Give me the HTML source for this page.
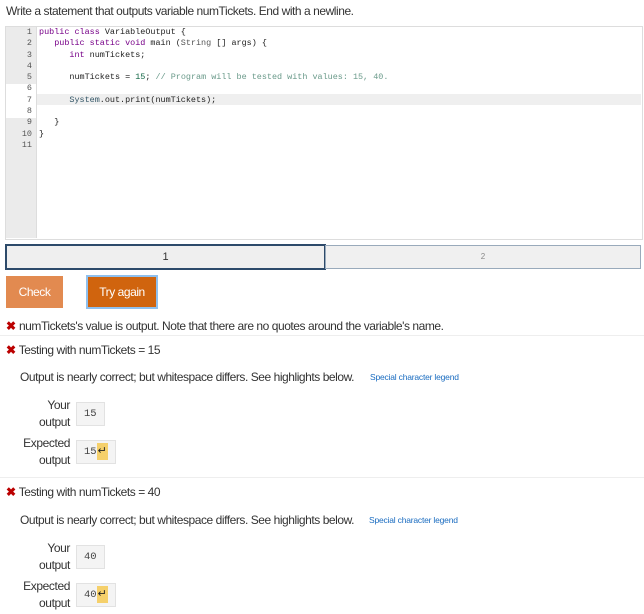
<!DOCTYPE html>
<html><head><style>
body{margin:0;width:644px;height:614px;background:#fff;font-family:"Liberation Sans",sans-serif;color:#333;position:relative;overflow:hidden}
.a{position:absolute;white-space:nowrap}
.t{font-size:12px;letter-spacing:-0.45px}
.code{font-family:"Liberation Mono",monospace;font-size:8.45px;line-height:11.3px}
.x{color:#b00;font-weight:bold;letter-spacing:0}
.box{position:absolute;background:#f4f4f4;border:1px solid #e2e2e2;font-family:"Liberation Mono",monospace;font-size:10.5px;padding:0 7px;line-height:22px;height:22px;color:#444}
.hl{background:#f5d06b;display:inline-block;width:11px;height:17px;line-height:15px;vertical-align:middle;text-align:center;font-family:"DejaVu Sans",sans-serif;font-size:11px;color:#222}
.lbl{position:absolute;text-align:right;width:70px;font-size:12px;line-height:17px;letter-spacing:-0.4px}
</style></head><body>
<div class="a t" style="left:6px;top:4px">Write a statement that outputs variable numTickets. End with a newline.</div>
<div class="a" style="left:5px;top:26px;width:636px;height:212px;border:1px solid #ddd;background:#fff"></div>
<div class="a" style="left:6px;top:27px;width:30px;height:211px;background:#ebebeb;border-right:1px solid #ddd"></div>
<div class="a" style="left:6px;top:84px;width:30px;height:34px;background:#fff"></div>
<div class="a" style="left:37px;top:94px;width:604px;height:11px;background:#efefef"></div>
<div class="a code" style="left:8px;top:27px;width:24px;text-align:right;color:#555">1<br>2<br>3<br>4<br>5<br>6<br>7<br>8<br>9<br>10<br>11</div>
<div class="a code" style="left:39px;top:27px;color:#222">
<span style="color:#708">public class</span> VariableOutput {<br>
&nbsp;&nbsp;&nbsp;<span style="color:#708">public static void</span> main (<span style="color:#555">String</span> [] args) {<br>
&nbsp;&nbsp;&nbsp;&nbsp;&nbsp;&nbsp;<span style="color:#708">int</span> numTickets;<br><br>
&nbsp;&nbsp;&nbsp;&nbsp;&nbsp;&nbsp;numTickets = <span style="color:#164">15</span>; <span style="color:#6a9a8a">// Program will be tested with values: 15, 40.</span><br><br>
&nbsp;&nbsp;&nbsp;&nbsp;&nbsp;&nbsp;<span style="color:#356">System</span>.out.print(numTickets);<br><br>
&nbsp;&nbsp;&nbsp;}<br>}</div>
<div class="a" style="left:5px;top:244px;width:317px;height:22px;background:#efefef;border:2px solid #2d4a6a;text-align:center;font-size:11px;line-height:22px">1</div>
<div class="a" style="left:325px;top:245px;width:314px;height:22px;background:#f0f0f0;border:1px solid #9ab;text-align:center;font-size:8px;line-height:22px;color:#888">2</div>
<div class="a t" style="left:6px;top:276px;width:57px;height:32px;background:#e28a50;color:#fff;line-height:32px;text-align:center">Check</div>
<div class="a t" style="left:86px;top:275px;width:68px;height:30px;background:#d0640e;border:2px solid #8fc0ee;color:#fff;line-height:30px;text-align:center">Try again</div>
<div class="a t" style="left:6px;top:319px"><span class="x">✖</span> numTickets's value is output. Note that there are no quotes around the variable's name.</div>
<div class="a" style="left:0;top:335px;width:644px;height:1px;background:#eee"></div>
<div class="a t" style="left:6px;top:343px"><span class="x">✖</span> Testing with numTickets = 15</div>
<div class="a t" style="left:20px;top:370px">Output is nearly correct; but whitespace differs. See highlights below.</div>
<div class="a" style="left:370px;top:372px;font-size:8.5px;color:#1a6cc0;letter-spacing:-0.2px">Special character legend</div>
<div class="lbl" style="left:0;top:397px">Your<br>output</div>
<div class="box" style="left:76px;top:402px">15</div>
<div class="lbl" style="left:0;top:435px">Expected<br>output</div>
<div class="box" style="left:76px;top:440px">15<span class="hl">↵</span></div>
<div class="a" style="left:0;top:477px;width:644px;height:1px;background:#eee"></div>
<div class="a t" style="left:6px;top:485px"><span class="x">✖</span> Testing with numTickets = 40</div>
<div class="a t" style="left:20px;top:513px">Output is nearly correct; but whitespace differs. See highlights below.</div>
<div class="a" style="left:369px;top:515px;font-size:8.5px;color:#1a6cc0;letter-spacing:-0.2px">Special character legend</div>
<div class="lbl" style="left:0;top:540px">Your<br>output</div>
<div class="box" style="left:76px;top:545px">40</div>
<div class="lbl" style="left:0;top:578px">Expected<br>output</div>
<div class="box" style="left:76px;top:583px">40<span class="hl">↵</span></div>
</body></html>
